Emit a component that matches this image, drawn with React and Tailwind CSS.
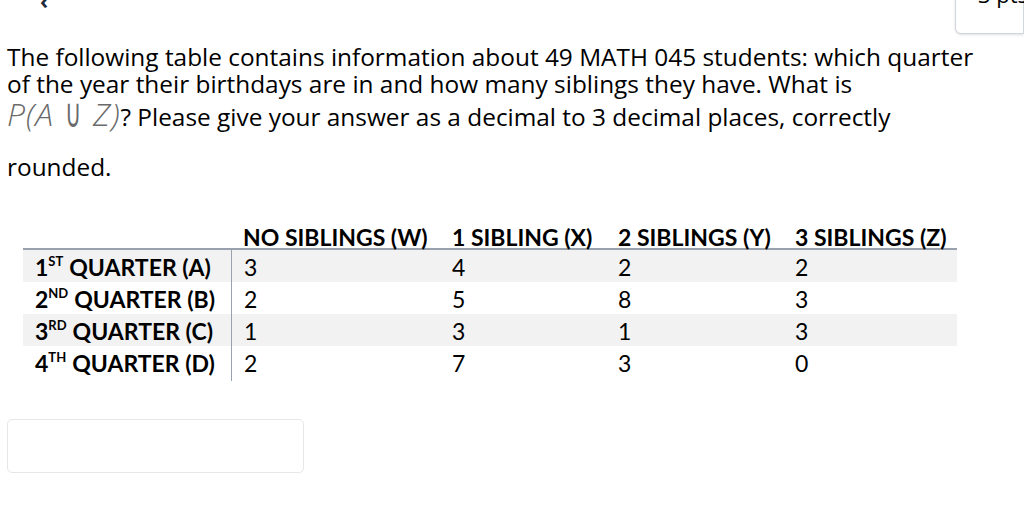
import React from "react";

const rows = [
  { n: "1", sup: "ST", q: "A", vals: [3, 4, 2, 2] },
  { n: "2", sup: "ND", q: "B", vals: [2, 5, 8, 3] },
  { n: "3", sup: "RD", q: "C", vals: [1, 3, 1, 3] },
  { n: "4", sup: "TH", q: "D", vals: [2, 7, 3, 0] },
];

const heads = ["NO SIBLINGS (W)", "1 SIBLING (X)", "2 SIBLINGS (Y)", "3 SIBLINGS (Z)"];

function App() {
  return (
    <div className="min-h-screen bg-white text-black font-['Open_Sans',sans-serif] overflow-hidden">
      {/* top strip, mostly scrolled out of view */}
      <div className="flex justify-between items-end h-[34px]">
        <div className="self-start -mt-[16px] ml-[40px] text-[22px] font-bold text-gray-800">‹</div>
        <div className="w-[69px] h-[54px] -mt-[20px] border border-gray-300 rounded-bl-md shadow-sm bg-white pl-[22px] pt-[2px] text-[22px] leading-[22px] whitespace-nowrap">
          3 pts
        </div>
      </div>

      <div className="pl-[7px] pt-[9px] text-[24.4px] leading-[27px] whitespace-nowrap">
        <p>
          The following table contains information about 49 MATH 045 students: which quarter
          <br />
          of the year their birthdays are in and how many siblings they have. What is
          <br />
          <span className="inline-block leading-[33px] h-[33px] align-bottom text-[32px] italic text-[#6b6b6b] font-light tracking-[1px]">
            P(A
            <span className="inline-block not-italic mx-[8px] font-['DejaVu_Sans',sans-serif] font-extralight text-[30px] scale-x-75 scale-y-[1.35] origin-[50%_72%]">
              ∪
            </span>
            Z)
          </span>
          ? Please give your answer as a decimal to 3 decimal places, correctly
        </p>
        <p className="mt-[23px]">rounded.</p>
      </div>

      <div className="ml-[23px] mt-[40px] w-[934px] font-['Lato',sans-serif] text-[23px]">
        <div className="grid grid-cols-[208px_209px_166px_177px_174px] font-bold h-[30px] items-center border-b-2 border-gray-400">
          <div></div>
          {heads.map((h) => (
            <div key={h} className="pl-[12px] whitespace-nowrap">{h}</div>
          ))}
        </div>
        {rows.map((r, i) => (
          <div
            key={r.q}
            className={`grid grid-cols-[208px_209px_166px_177px_174px] h-[32px] items-center ${
              i % 2 === 0 ? "bg-[#f2f2f2]" : "bg-white"
            }`}
          >
            <div className="pl-[12px] font-bold h-full flex items-center whitespace-nowrap">
              {r.n}
              <sup className="text-[13px] mr-[6px]">{r.sup}</sup>
              QUARTER ({r.q})
            </div>
            {r.vals.map((v, j) => (
              <div
                key={j}
                className={`pl-[12px] h-full flex items-center ${j === 0 ? "border-l border-gray-400" : ""}`}
              >
                {v}
              </div>
            ))}
          </div>
        ))}
      </div>

      <div className="ml-[7px] mt-[41px] w-[297px] h-[54px] border border-gray-200 rounded-[5px]"></div>
    </div>
  );
}

export default App;
